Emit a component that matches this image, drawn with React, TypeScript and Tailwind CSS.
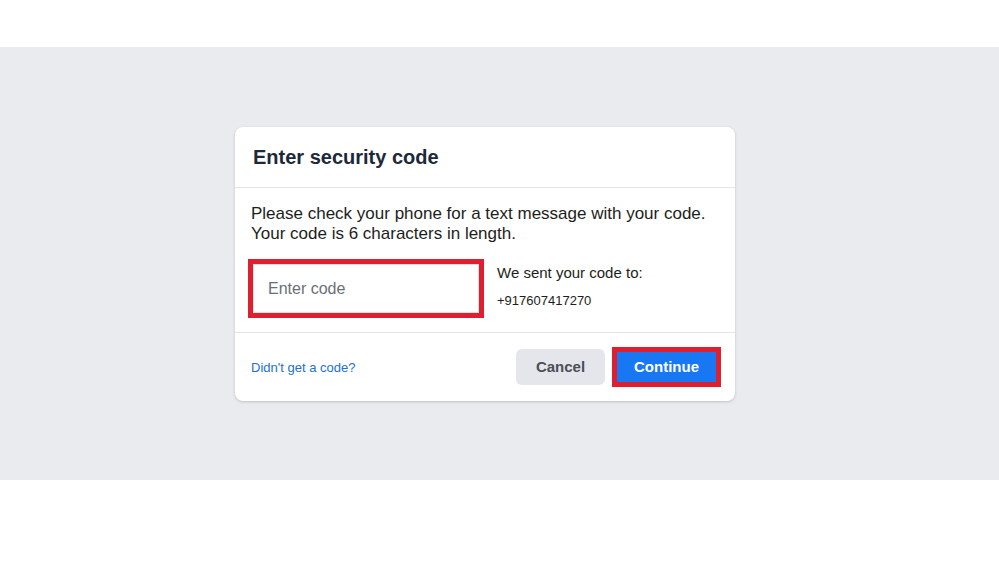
export default function App() {
  return (
    <div className="flex h-[576px] w-full flex-col bg-white font-['Liberation_Sans',Arial,sans-serif]">
      {/* top bar */}
      <div className="h-[47px] shrink-0 bg-white shadow-[0_1px_2px_rgba(0,0,0,0.1)]" />
      {/* content area */}
      <div className="flex h-[433px] shrink-0 bg-[#e9ebee] pl-[235px] pt-[80px]">
        <div className="h-[274px] w-[500px] rounded-lg bg-white shadow-[0_1px_3px_rgba(0,0,0,0.18)]">
          <div className="flex h-[61px] items-center border-b border-[#e2e4e8] px-[18px]">
            <h2 className="text-[20px] font-bold text-[#1d2939]">Enter security code</h2>
          </div>
          <div className="h-[145px] border-b border-[#e2e4e8] px-4 pt-[16px]">
            <p className="text-[17px] leading-5 text-[#1c1e21]">
              Please check your phone for a text message with your code.
              <br />
              Your code is 6 characters in length.
            </p>
            <div className="mt-[15px] flex items-start">
              <div className="-ml-[3px] border-[5px] border-[#dd1f2f]">
                <input
                  className="h-[49px] w-[226px] border border-[#dddfe2] bg-white px-[14px] text-[16px] text-[#1c1e21] outline-none placeholder:text-[#6b6f75]"
                  placeholder="Enter code"
                />
              </div>
              <div className="ml-[13px] pt-[5px] text-[#1c1e21]">
                <div className="text-[15px] leading-[18px]">We sent your code to:</div>
                <div className="mt-[11px] text-[13px] leading-4">+917607417270</div>
              </div>
            </div>
          </div>
          <div className="flex h-[68px] items-center justify-between pl-4 pr-[14px]">
            <a className="pt-[2px] text-[13px] text-[#216fdb]" href="#">
              Didn&apos;t get a code?
            </a>
            <div className="flex items-center gap-[7px]">
              <button className="h-9 w-[89px] rounded-md bg-[#e4e6eb] text-[15px] font-bold text-[#4b4f56]">
                Cancel
              </button>
              <div className="border-[5px] border-[#dd1f2f]">
                <button className="block h-[30px] w-[99px] bg-[#1877f2] text-[15px] font-bold text-white">
                  Continue
                </button>
              </div>
            </div>
          </div>
        </div>
      </div>
      <div className="flex-1 bg-white" />
    </div>
  );
}
